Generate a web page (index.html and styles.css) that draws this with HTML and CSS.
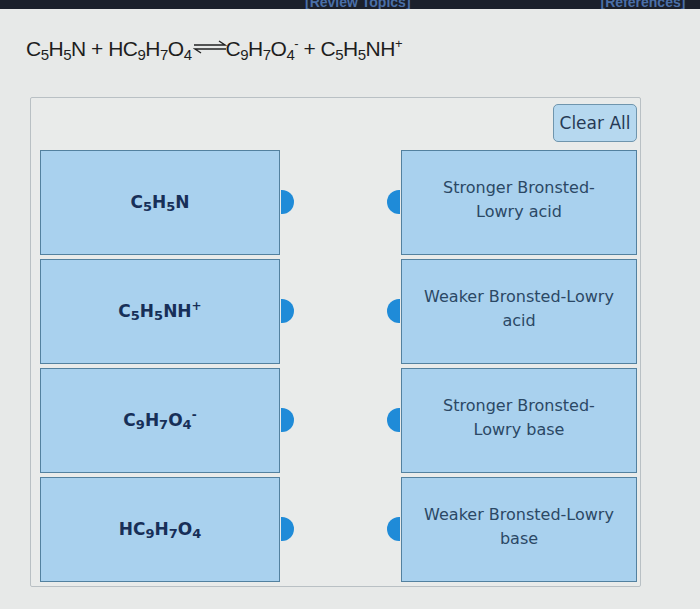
FILE: index.html
```html
<!DOCTYPE html>
<html lang="en">
<head>
    <meta charset="UTF-8">
    <meta name="viewport" content="width=device-width, initial-scale=1.0">
    <title>Bronsted-Lowry Matching</title>
    <link rel="stylesheet" href="styles.css">
</head>
<body>
    <div class="topbar">
        <span class="toplink">[Review Topics]</span>
        <span class="toplink">[References]</span>
    </div>

    <div class="equation">
        C<sub>5</sub>H<sub>5</sub>N + HC<sub>9</sub>H<sub>7</sub>O<sub>4</sub><svg class="eq-arrow" width="34" height="14" viewBox="0 0 34 14"><path d="M1 5 H32 L26 1" fill="none" stroke="#222" stroke-width="1.4"/><path d="M33 9 H2 L8 13" fill="none" stroke="#222" stroke-width="1.4"/></svg>C<sub>9</sub>H<sub>7</sub>O<sub>4</sub><sup>-</sup> + C<sub>5</sub>H<sub>5</sub>NH<sup>+</sup>
    </div>

    <div class="panel">
        <div class="toolbar">
            <button class="btn-clear">Clear All</button>
        </div>
        <div class="columns">
            <div class="column">
                <div class="card card-left"><span>C<sub>5</sub>H<sub>5</sub>N</span></div>
                <div class="card card-left"><span>C<sub>5</sub>H<sub>5</sub>NH<sup>+</sup></span></div>
                <div class="card card-left"><span>C<sub>9</sub>H<sub>7</sub>O<sub>4</sub><sup>-</sup></span></div>
                <div class="card card-left"><span>HC<sub>9</sub>H<sub>7</sub>O<sub>4</sub></span></div>
            </div>
            <div class="column">
                <div class="card card-right"><span>Stronger Bronsted-<br>Lowry acid</span></div>
                <div class="card card-right"><span>Weaker Bronsted-Lowry<br>acid</span></div>
                <div class="card card-right"><span>Stronger Bronsted-<br>Lowry base</span></div>
                <div class="card card-right"><span>Weaker Bronsted-Lowry<br>base</span></div>
            </div>
        </div>
    </div>
</body>
</html>
```

FILE: styles.css
```css
* { box-sizing: border-box; }
body {
    margin: 0;
    background: #e7e9e8;
    font-family: "DejaVu Sans", Verdana, sans-serif;
}
.topbar {
    height: 9px;
    background: #1b202b;
    overflow: hidden;
    display: flex;
    align-items: flex-end;
    gap: 190px;
    padding-left: 305px;
}
.toplink {
    color: #4a6fa8;
    font-family: "Liberation Sans", Arial, sans-serif;
    font-weight: bold;
    font-size: 14px;
    line-height: 14px;
    flex-shrink: 0;
}
.equation {
    font-family: "Liberation Sans", Arial, sans-serif;
    font-size: 21px;
    color: #1e1e1e;
    padding: 28px 0 0 26px;
    height: 88px;
    letter-spacing: -0.5px;
}
.equation sub { font-size: 15px; vertical-align: -4px; line-height: 0; }
.equation sup { font-size: 13px; vertical-align: 8px; line-height: 0; }
.eq-arrow { vertical-align: 2px; margin: 0 -1px 0 1px; }
.panel {
    margin: 0 59px 0 30px;
    border: 1px solid #b9c0c4;
    border-radius: 2px;
    background: #e9ebea;
    padding: 6px 3px 4px 9px;
}
.toolbar {
    display: flex;
    justify-content: flex-end;
    margin-bottom: 8px;
}
.btn-clear {
    width: 84px;
    height: 38px;
    background: #b6d8ef;
    border: 1px solid #6f95ad;
    border-radius: 5px;
    color: #263a55;
    font-family: "DejaVu Sans", Verdana, sans-serif;
    font-size: 17px;
    padding: 0;
}
.columns {
    display: grid;
    grid-template-columns: 240px 236px;
    justify-content: space-between;
}
.column {
    display: flex;
    flex-direction: column;
    gap: 4px;
}
.card {
    position: relative;
    height: 105px;
    background: #a9d1ee;
    border: 1px solid #53819f;
    display: flex;
    align-items: center;
    justify-content: center;
    text-align: center;
}
.card-left {
    color: #172f58;
    font-weight: bold;
    font-size: 17px;
    padding-bottom: 2px;
}
.card-left sub { font-size: 13px; vertical-align: -3px; line-height: 0; }
.card-left sup { font-size: 12px; vertical-align: 7px; line-height: 0; }
.card-right {
    color: #2b4865;
    font-size: 16px;
    line-height: 24px;
    padding-bottom: 6px;
}
/* connector knobs */
.card::after {
    content: "";
    position: absolute;
    top: 50%;
    width: 13px;
    height: 24px;
    margin-top: -13px;
    background: #1f8bd8;
}
.card-left::after {
    right: -15px;
    border-radius: 0 12px 12px 0;
}
.card-right::after {
    left: -15px;
    border-radius: 12px 0 0 12px;
}
```
